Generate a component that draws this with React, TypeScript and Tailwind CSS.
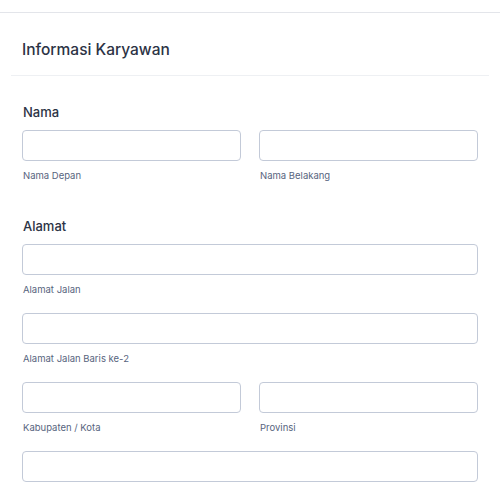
const Input = () => (
  <input
    type="text"
    className="block h-[31px] w-full rounded-[4px] border border-[#c3cad8] bg-white px-2 text-sm text-[#2c3345] outline-none"
  />
);

const Field = ({ sub }: { sub?: string }) => (
  <div className="flex flex-1 flex-col">
    <Input />
    {sub && (
      <span className="mt-[8px] h-[14px] pl-[1px] text-[9.5px] leading-[14px] text-[#57647e]">{sub}</span>
    )}
  </div>
);

const Label = ({ children }: { children: React.ReactNode }) => (
  <div className="pl-[1px] text-[13px] font-medium leading-[20px] text-[#2c3345]">{children}</div>
);

export default function App() {
  return (
    <div className="min-h-[484px] w-[500px] overflow-hidden bg-white font-['Inter','Noto_Sans',sans-serif]">
      <div className="h-[12px]" />
      <div className="h-px bg-[#e3e5ea]" />
      <div className="px-[11px]">
        <div className="border-b border-[#eef0f3] px-[11px] pt-[25px] pb-[13px]">
          <h1 className="text-[15.5px] font-medium leading-[24px] text-[#2c3345]">Informasi Karyawan</h1>
        </div>
      </div>

      <div className="px-[22px] pt-[26px]">
        <Label>Nama</Label>
        <div className="mt-[8px] flex gap-[18px]">
          <Field sub="Nama Depan" />
          <Field sub="Nama Belakang" />
        </div>

        <div className="mt-[33px]">
          <Label>Alamat</Label>
        </div>
        <div className="mt-[8px] flex flex-col gap-[16px]">
          <Field sub="Alamat Jalan" />
          <Field sub="Alamat Jalan Baris ke-2" />
          <div className="flex gap-[18px]">
            <Field sub="Kabupaten / Kota" />
            <Field sub="Provinsi" />
          </div>
          <Field />
        </div>
      </div>
    </div>
  );
}
